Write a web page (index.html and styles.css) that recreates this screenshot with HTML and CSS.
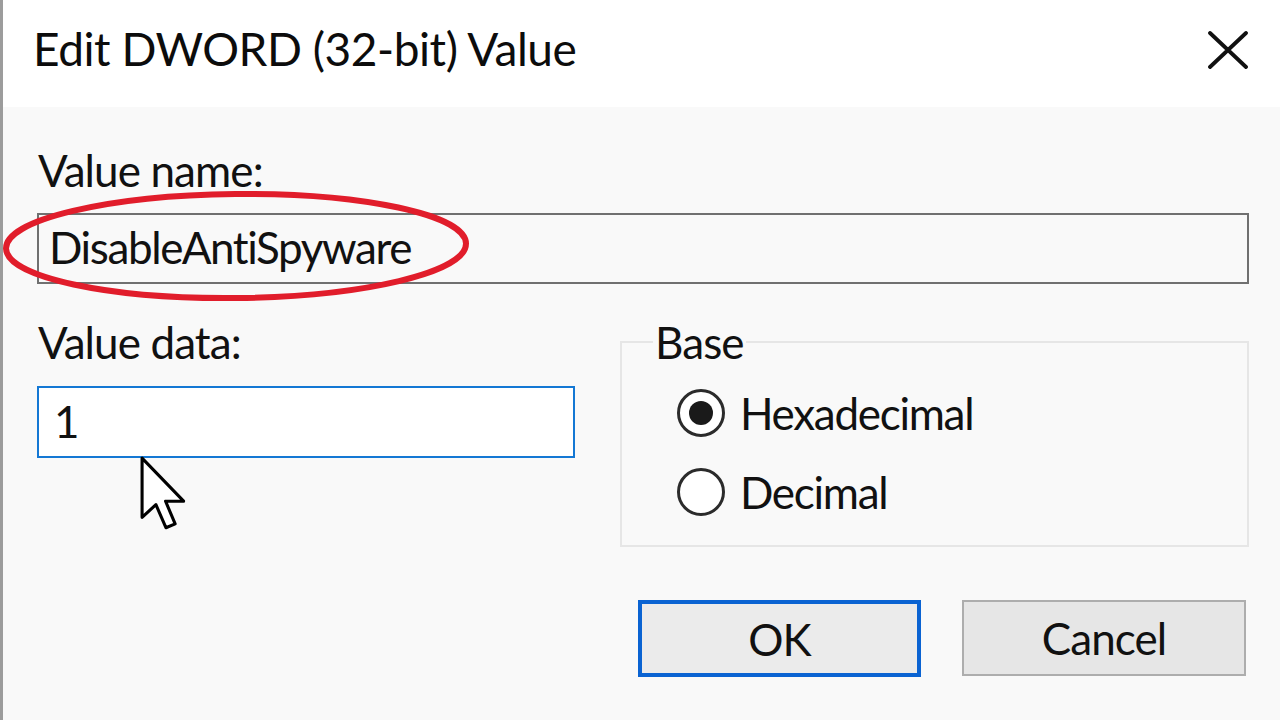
FILE: index.html
```html
<!DOCTYPE html>
<html lang="en">
<head>
<meta charset="utf-8">
<title>Edit DWORD (32-bit) Value</title>
<link rel="stylesheet" href="styles.css">
</head>
<body>
<div class="window">
  <div class="titlebar">
    <span class="title">Edit DWORD (32-bit) Value</span>
    <svg class="close" width="40" height="38" viewBox="0 0 40 38" aria-label="Close">
      <path d="M2 2 L38 36 M38 2 L2 36" stroke="#111" stroke-width="3.8" stroke-linecap="round" fill="none"/>
    </svg>
  </div>
  <div class="content">
    <div class="field-label">Value name:</div>
    <div class="name-box">DisableAntiSpyware</div>
    <div class="row">
      <div class="left-col">
        <div class="field-label">Value data:</div>
        <div class="data-box">1</div>
      </div>
      <fieldset class="group">
        <legend>Base</legend>
        <div class="radio-row">
          <span class="radio checked"></span>
          <span class="radio-text">Hexadecimal</span>
        </div>
        <div class="radio-row">
          <span class="radio"></span>
          <span class="radio-text">Decimal</span>
        </div>
      </fieldset>
    </div>
    <div class="buttons">
      <div class="btn btn-default">OK</div>
      <div class="btn">Cancel</div>
    </div>
  </div>
  <svg class="highlight" width="472" height="114" viewBox="0 0 472 114">
    <ellipse cx="234" cy="57" rx="230" ry="52" fill="none" stroke="#e11d2b" stroke-width="6" transform="rotate(-0.6 234 57)"/>
  </svg>
  <svg class="cursor" width="50" height="77" viewBox="0 0 13 20">
    <path d="M0.8 0.8 L0.8 16.2 L4.4 12.9 L7 18.9 L9.4 17.9 L6.9 12 L11.6 12 Z" fill="#fff" stroke="#000" stroke-width="0.8" stroke-linejoin="round"/>
  </svg>
</div>
</body>
</html>
```

FILE: styles.css
```css
html, body {
  margin: 0;
  padding: 0;
}

body {
  width: 1280px;
  height: 720px;
  overflow: hidden;
  background: #f9f9f9;
  font-family: "Lato", "Open Sans", sans-serif;
  color: #111;
}

.window {
  position: relative;
  width: 1280px;
  height: 720px;
  box-sizing: border-box;
  border-left: 3px solid #9c9c9c;
  background: #f9f9f9;
}

.titlebar {
  height: 107px;
  box-sizing: border-box;
  background: #ffffff;
  display: flex;
  align-items: flex-start;
  justify-content: space-between;
  padding: 21px 32px 0 30px;
}

.title {
  font-size: 46px;
  line-height: 56px;
  letter-spacing: -0.45px;
  color: #0c0c0c;
}

.close {
  margin-top: 10px;
}

.content {
  padding: 0 31px 0 34px;
  font-size: 44px;
  line-height: 56px;
  letter-spacing: -0.9px;
}

.field-label {
  height: 56px;
  padding-left: 1px;
}

.content > .field-label {
  margin-top: 35px;
}

.name-box {
  margin-top: 15px;
  height: 71px;
  box-sizing: border-box;
  border: 2px solid #707070;
  background: #f9f9f9;
  padding-left: 10px;
  line-height: 64px;
  letter-spacing: -1.4px;
}

.row {
  display: flex;
  justify-content: space-between;
  align-items: flex-start;
  margin-top: 30px;
}

.left-col {
  width: 538px;
}

.data-box {
  margin-top: 16px;
  height: 72px;
  box-sizing: border-box;
  border: 2px solid #1478d4;
  background: #ffffff;
  padding-left: 15px;
  line-height: 66px;
}

.group {
  width: 629px;
  box-sizing: border-box;
  margin: 0;
  padding: 3px 0 14px 31px;
  border: 2px solid #e6e6e6;
  min-width: 0;
}

.group legend {
  padding: 0 2px;
  line-height: 56px;
}

.radio-row {
  height: 79px;
  display: flex;
  align-items: center;
  gap: 15px;
  margin-left: 24px;
  letter-spacing: -1.3px;
}

.radio {
  position: relative;
  width: 48px;
  height: 48px;
  box-sizing: border-box;
  border: 3px solid #2b2b2b;
  border-radius: 50%;
  background: #fff;
  flex: none;
}

.radio.checked::after {
  content: "";
  position: absolute;
  left: 9px;
  top: 9px;
  width: 24px;
  height: 24px;
  border-radius: 50%;
  background: #1a1a1a;
}

.radio-text {
  line-height: 56px;
}

.buttons {
  display: flex;
  justify-content: flex-end;
  gap: 41px;
  margin-top: 53px;
  padding-right: 3px;
}

.btn {
  width: 284px;
  height: 76px;
  box-sizing: border-box;
  border: 2px solid #adadad;
  background: #e6e6e6;
  display: flex;
  align-items: center;
  justify-content: center;
  line-height: 56px;
}

.btn-default {
  width: 283px;
  height: 77px;
  border: 4px solid #0a63d2;
  background: #ebebeb;
}

.highlight {
  position: absolute;
  left: -1px;
  top: 189px;
}

.cursor {
  position: absolute;
  left: 136px;
  top: 455px;
}
```
